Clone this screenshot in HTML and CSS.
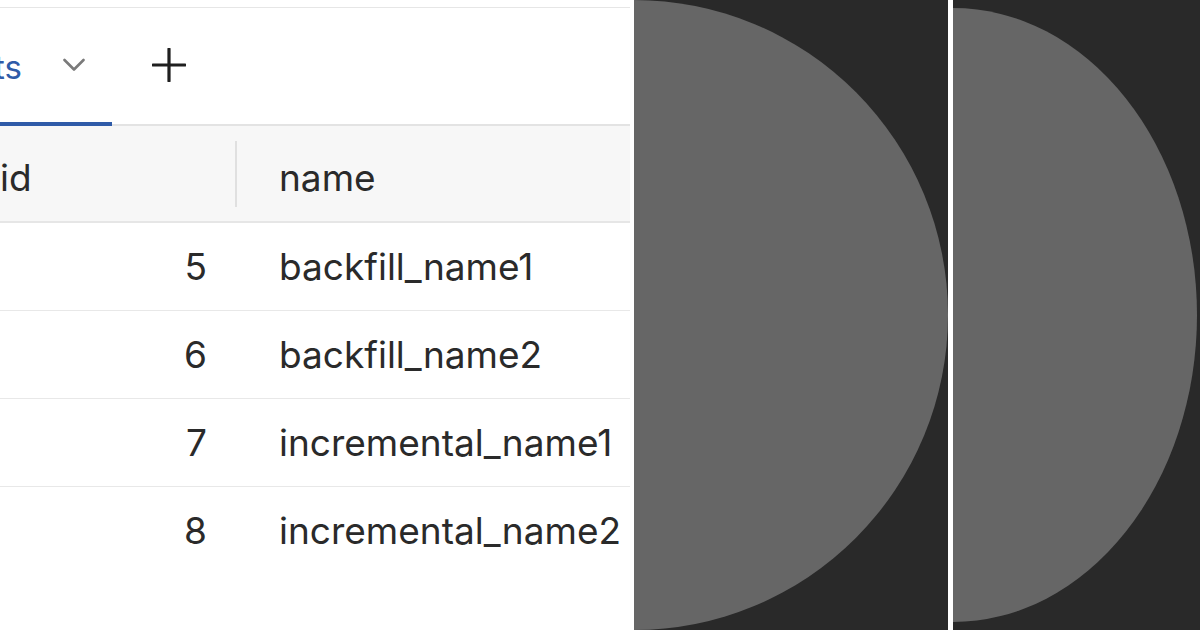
FILE: index.html
```html
<!DOCTYPE html>
<html lang="en">
<head>
  <meta charset="UTF-8">
  <meta name="viewport" content="width=device-width, initial-scale=1.0">
  <title>Results</title>
  <link rel="stylesheet" href="styles.css">
</head>
<body>

<div class="grid-pane">
  <div class="tabbar">
    <div class="tab">
      <span class="tab-label">Results</span>
      <svg class="chevron" width="22" height="14" viewBox="0 0 22 14">
        <path d="M1.5 2 L11 11.5 L20.5 2" fill="none" stroke="#7a7a7a" stroke-width="2.6" stroke-linecap="round" stroke-linejoin="round"/>
      </svg>
    </div>
    <button class="add-tab" type="button" aria-label="New tab">
      <svg width="34" height="34" viewBox="0 0 34 34">
        <path d="M17 1 V33 M1 17 H33" stroke="#1f1f1f" stroke-width="3.2" stroke-linecap="round"/>
      </svg>
    </button>
  </div>

  <div class="sheet">
    <div class="row head">
      <div class="cell id">id</div>
      <span class="col-sep"></span>
      <div class="cell name">name</div>
    </div>
    <div class="row">
      <div class="cell id num">5</div>
      <div class="cell name">backfill_name1</div>
    </div>
    <div class="row">
      <div class="cell id num">6</div>
      <div class="cell name">backfill_name2</div>
    </div>
    <div class="row">
      <div class="cell id num">7</div>
      <div class="cell name">incremental_name1</div>
    </div>
    <div class="row last">
      <div class="cell id num">8</div>
      <div class="cell name">incremental_name2</div>
    </div>
  </div>
</div>

<div class="dark-pane wide">
  <div class="half-disc"></div>
</div>
<div class="dark-pane narrow">
  <div class="half-disc"></div>
</div>

</body>
</html>
```

FILE: styles.css
```css
html, body {
  margin: 0;
  height: 630px;
}
body {
  display: flex;
  width: 1200px;
  background: #ffffff;
  font-family: Inter, "Noto Sans", sans-serif;
  color: #2a2a2a;
  overflow: hidden;
}

/* left: the result grid */
.grid-pane {
  width: 630px;
  margin-right: 4px;
  overflow: hidden;
  display: flex;
  flex-direction: column;
}
.tabbar {
  margin-top: 7px;
  height: 116px;
  border-top: 1px solid #e6e6e6;
  border-bottom: 2px solid #e3e3e3;
  display: flex;
  align-items: stretch;
}
.tab {
  width: 85px;
  padding-right: 27px;
  flex-shrink: 0;
  display: flex;
  align-items: center;
  justify-content: flex-end;
  gap: 41px;
  overflow: hidden;
  border-bottom: 4px solid #2f5ba8;
  margin-bottom: -2px;
  padding-top: 4px;
}
.tab-label {
  flex-shrink: 0;
  white-space: nowrap;
  font-size: 33px;
  color: #2f5ba8;
}
.chevron {
  flex-shrink: 0;
  margin-top: -4px;
}
.add-tab {
  margin-left: 40px;
  margin-top: -2px;
  padding: 0;
  border: none;
  background: none;
  display: flex;
  align-items: center;
}

/* scrolled a little to the right, so the id column is cut */
.sheet {
  margin-left: -44px;
  width: 674px;
  font-size: 37px;
}
.row {
  display: flex;
  align-items: center;
  height: 87px;
  border-bottom: 1px solid #e8e8e8;
}
.row.last {
  border-bottom: none;
}
.row.head {
  background: #f7f7f7;
  border-bottom: 2px solid #e6e6e6;
  padding-top: 7px;
  box-sizing: border-box;
  height: 97px;
}
.cell.id {
  width: 281px;
  box-sizing: border-box;
  padding-left: 44px;
}
.row.head .cell.id {
  width: 279px;
}
.cell.num {
  text-align: right;
  padding-right: 30px;
}
.col-sep {
  width: 2px;
  height: 66px;
  margin-top: -7px;
  background: #e0e0e0;
}
.cell.name {
  padding-left: 42px;
  white-space: nowrap;
}

/* right: dark previews with grey half discs */
.dark-pane {
  background: #292929;
  height: 630px;
  display: flex;
}
.dark-pane.wide {
  width: 314px;
  margin-right: 5px;
}
.dark-pane.narrow {
  width: 247px;
}
.half-disc {
  background: #666666;
  border-radius: 0 100% 100% 0 / 0 50% 50% 0;
}
.wide .half-disc {
  width: 314px;
  height: 630px;
}
.narrow .half-disc {
  width: 244px;
  height: 614px;
  margin-top: 8px;
}
```
